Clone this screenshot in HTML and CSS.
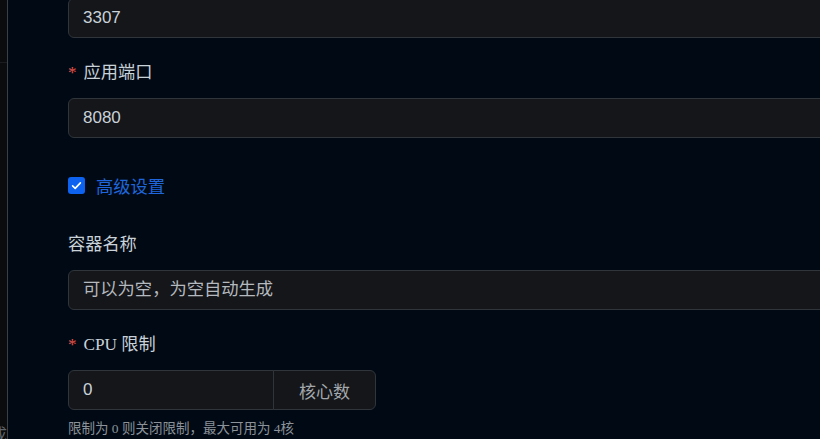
FILE: index.html
```html
<!DOCTYPE html>
<html lang="zh">
<head>
<meta charset="utf-8">
<link rel="stylesheet" href="styles.css">
</head>
<body>
<div class="page">
  <div class="backdrop">
    <div class="backdrop-top"></div>
    <div class="backdrop-fill"></div>
    <div class="backdrop-text">自动生成</div>
  </div>
  <div class="drawer">
    <div class="field first">
      <input class="input" type="text" value="3307">
    </div>
    <div class="field">
      <label class="label"><span class="req">*</span>应用端口</label>
      <input class="input" type="text" value="8080">
    </div>
    <div class="check-row">
      <span class="checkbox">
        <svg viewBox="0 0 17 17" width="17" height="17"><path d="M4.6 8.9 L7.2 11.4 L12.4 5.9" fill="none" stroke="#fff" stroke-width="1.6" stroke-linecap="round" stroke-linejoin="round"/></svg>
      </span>
      <span class="check-label">高级设置</span>
    </div>
    <div class="field">
      <label class="label">容器名称</label>
      <input class="input" type="text" placeholder="可以为空，为空自动生成">
    </div>
    <div class="field">
      <label class="label"><span class="req">*</span>CPU 限制</label>
      <div class="group">
        <input class="input group-input" type="text" value="0">
        <span class="addon">核心数</span>
      </div>
      <div class="help">限制为 0 则关闭限制，最大可用为 4核</div>
    </div>
  </div>
</div>
</body>
</html>
```

FILE: styles.css
```css
html, body {
  margin: 0;
  padding: 0;
  background: #010a14;
  height: 439px;
  overflow: hidden;
}

.page {
  display: flex;
  height: 439px;
  font-family: "Liberation Serif", "Noto Sans CJK SC", serif;
  color: #c9d1d9;
}

.backdrop {
  width: 7px;
  flex: none;
  background: #0b0c0d;
  border-right: 1px solid #3a3f46;
  display: flex;
  flex-direction: column;
  overflow: hidden;
}

.backdrop-top {
  height: 62px;
  border-bottom: 1px solid #1a1c1f;
}

.backdrop-fill {
  flex: 1;
}

.backdrop-text {
  font-family: "Noto Sans CJK SC", sans-serif;
  font-size: 17px;
  line-height: 22px;
  color: #5f656c;
  white-space: nowrap;
  direction: rtl;
  margin-bottom: -6px;
}

.drawer {
  flex: 1;
  min-width: 0;
  padding-left: 60px;
  margin-top: -2px;
}

.field {
  margin-bottom: 23px;
}

.label {
  display: block;
  font-size: 17.2px;
  line-height: 24px;
  margin-bottom: 13px;
  color: #c9d1d9;
}

.req {
  color: #e5534b;
  margin-right: 7px;
}

.input {
  display: block;
  box-sizing: border-box;
  width: 800px;
  height: 40px;
  margin: 0;
  padding: 0 14px;
  background: #141619;
  border: 1px solid #30353b;
  border-radius: 6px;
  font-family: "Liberation Sans", "Noto Sans CJK SC", sans-serif;
  font-size: 17px;
  color: #c9d1d9;
  outline: none;
}

.input::placeholder {
  color: #b4b9bf;
  font-size: 17.3px;
}

.check-row {
  display: flex;
  align-items: center;
  gap: 11px;
  padding-top: 16px;
  margin-bottom: 39px;
}

.checkbox {
  width: 17px;
  height: 17px;
  border-radius: 3px;
  background: #0d63ef;
  display: flex;
}

.check-label {
  font-family: "Noto Sans CJK SC", sans-serif;
  font-size: 17.3px;
  line-height: 17px;
  color: #1f66dc;
}

.group {
  display: flex;
  width: 309px;
}

.group-input {
  width: 206px;
  border-radius: 6px 0 0 6px;
}

.addon {
  box-sizing: border-box;
  width: 103px;
  height: 40px;
  display: flex;
  align-items: center;
  justify-content: center;
  background: #141619;
  border: 1px solid #30353b;
  border-radius: 0 6px 6px 0;
  margin-left: -1px;
  font-family: "Noto Sans CJK SC", sans-serif;
  font-size: 17px;
  color: #a3a8ad;
}

.help {
  margin-top: 9px;
  font-size: 13.5px;
  line-height: 20px;
  color: #8b929a;
}
```
